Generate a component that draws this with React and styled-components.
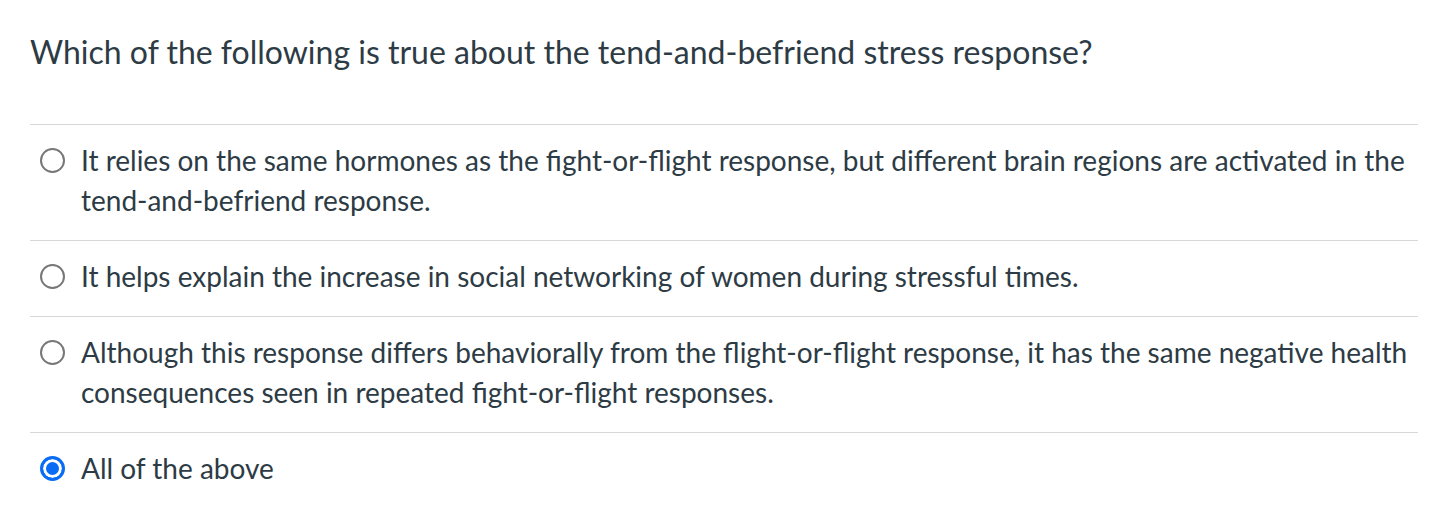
import styled, { createGlobalStyle } from "styled-components";

const GlobalStyle = createGlobalStyle`
  body {
    margin: 0;
    background: #fff;
    font-family: Lato, "Liberation Sans", sans-serif;
    color: #2d3b45;
  }
`;

const Container = styled.div`
  width: 1450px;
  height: 516px;
  padding: 28px 32px 0 30px;
  box-sizing: border-box;
`;

const Question = styled.h2`
  margin: 0;
  font-size: 32px;
  font-weight: 400;
  line-height: 48px;
  height: 96px;
`;

const Answers = styled.div`
  display: flex;
  flex-direction: column;
`;

const Answer = styled.label`
  display: flex;
  align-items: flex-start;
  gap: 16px;
  padding: 15px 0 20px 10px;
  border-top: 1px solid #d8d8d8;
  font-size: 28px;
  line-height: 40px;
`;

const Radio = styled.span`
  flex: none;
  width: 25px;
  height: 25px;
  margin-top: 8px;
  box-sizing: border-box;
  border-radius: 50%;
  border: ${(p) => (p.checked ? "3px solid #0a6cf5" : "2px solid #777")};
  background: ${(p) => (p.checked ? "#0a6cf5" : "#fff")};
  box-shadow: ${(p) => (p.checked ? "inset 0 0 0 3px #fff" : "none")};
`;

const Text = styled.span`
  flex: 1;
`;

const answers = [
  {
    text: "It relies on the same hormones as the fight-or-flight response, but different brain regions are activated in the tend-and-befriend response.",
  },
  {
    text: "It helps explain the increase in social networking of women during stressful times.",
  },
  {
    text: "Although this response differs behaviorally from the flight-or-flight response, it has the same negative health consequences seen in repeated fight-or-flight responses.",
  },
  { text: "All of the above", checked: true },
];

export default function App() {
  return (
    <>
      <GlobalStyle />
      <Container>
        <Question>
          Which of the following is true about the tend-and-befriend stress
          response?
        </Question>
        <Answers>
          {answers.map((a) => (
            <Answer key={a.text}>
              <Radio checked={a.checked} />
              <Text>{a.text}</Text>
            </Answer>
          ))}
        </Answers>
      </Container>
    </>
  );
}
